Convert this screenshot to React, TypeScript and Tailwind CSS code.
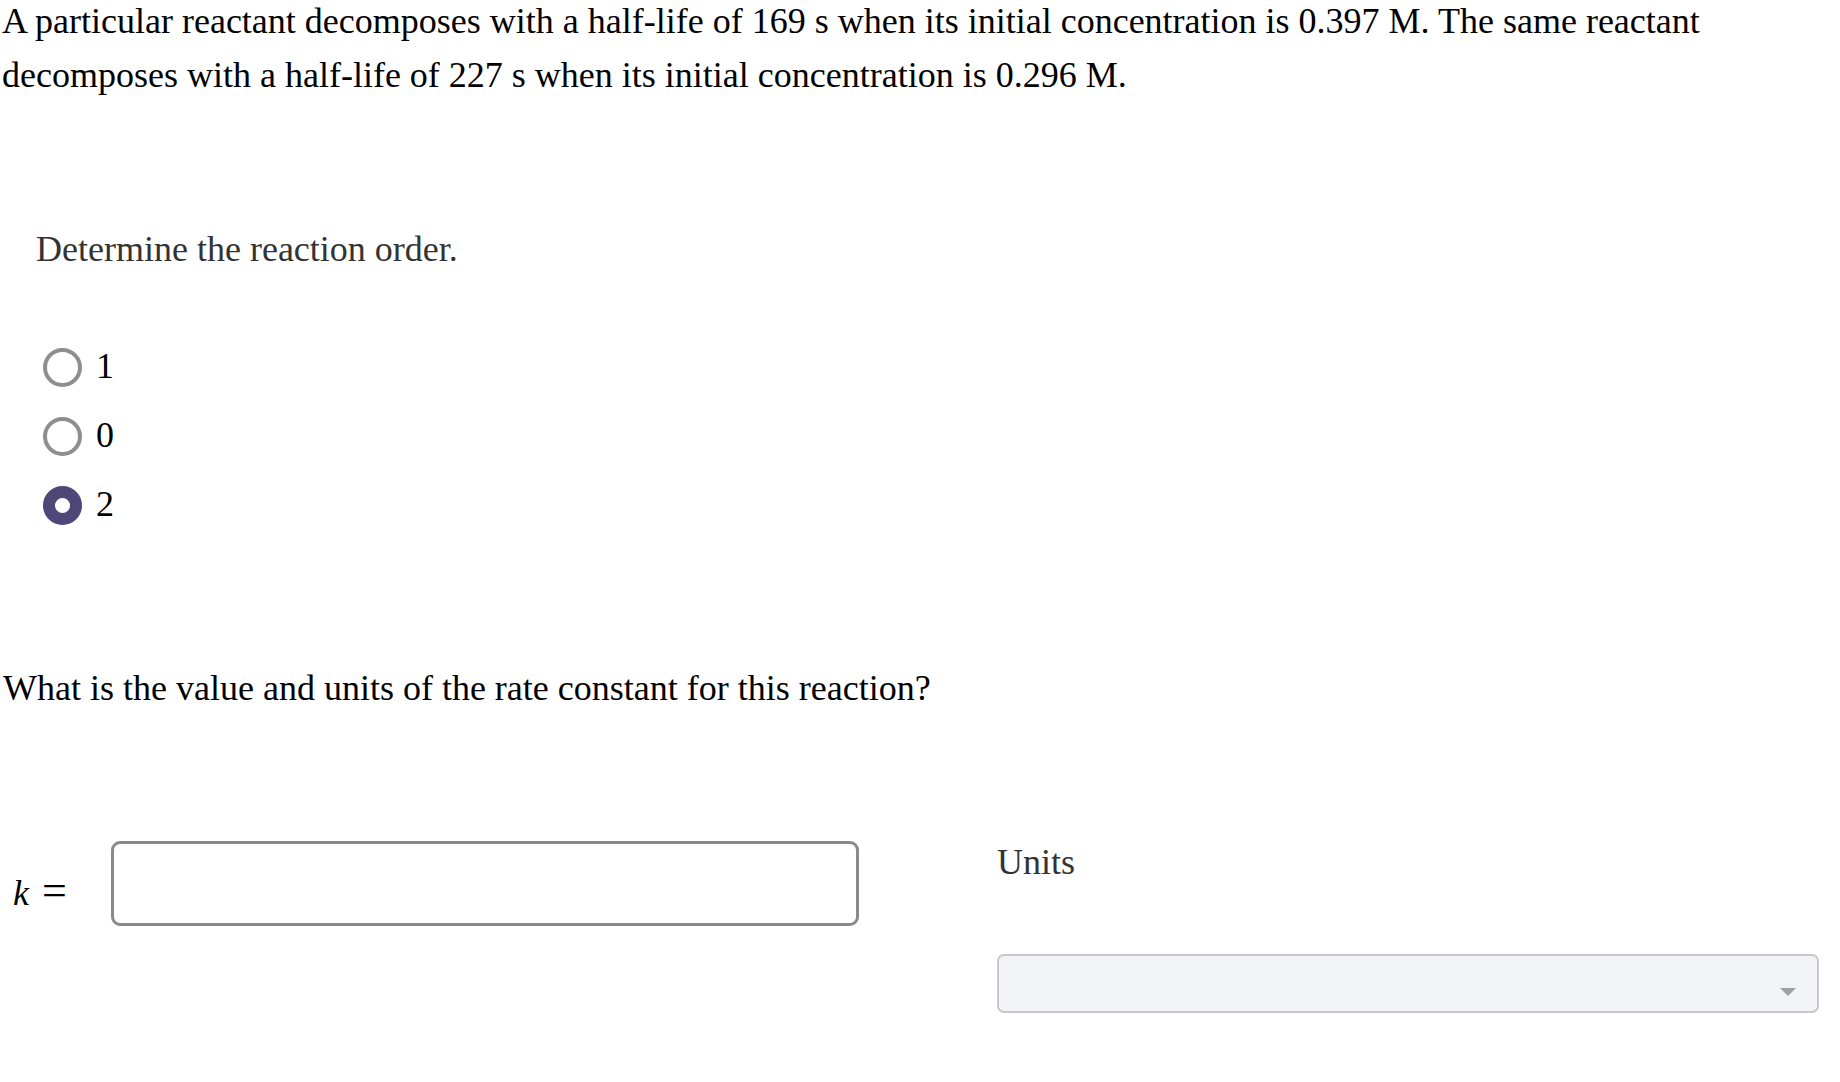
import React from "react";

const serif = "font-['Liberation_Serif','Times_New_Roman',serif]";

function Radio({ label, checked }: { label: string; checked?: boolean }) {
  return (
    <div className="flex h-[69px] items-center">
      {checked ? (
        <span className="ml-[43px] mt-[3px] box-border h-[39px] w-[39px] rounded-full border-[12.5px] border-[#4f4778] bg-white" />
      ) : (
        <span className="ml-[43px] mt-[3px] box-border h-[39px] w-[39px] rounded-full border-[4px] border-[#8e8e8e] bg-white" />
      )}
      <span className="ml-[14px] pt-[2px] text-[36px] leading-[69px] text-black">{label}</span>
    </div>
  );
}

export default function App() {
  return (
    <div className={`${serif} min-h-[1082px] w-[1840px] overflow-hidden bg-white text-black`}>
      <p className="mt-[-6px] pl-[2px] text-[36px] leading-[54px] text-black">
        A particular reactant decomposes with a half-life of 169 s when its initial concentration is 0.397 M. The same reactant
        <br />
        decomposes with a half-life of 227 s when its initial concentration is 0.296 M.
      </p>

      <p className="mt-[120px] pl-[36px] text-[36px] leading-[54px] text-[#333333]">
        Determine the reaction order.
      </p>

      <div className="mt-[55px] flex flex-col">
        <Radio label="1" />
        <Radio label="0" />
        <Radio label="2" checked />
      </div>

      <p className="mt-[123px] pl-[3px] text-[36px] leading-[54px] text-black">
        What is the value and units of the rate constant for this reaction?
      </p>

      <div className="mt-[120px] flex items-start">
        <div className="flex w-[997px] items-start">
          <span className="mt-[29px] flex w-[111px] items-baseline whitespace-nowrap pl-[13px] text-[36px] leading-[54px] text-black">
            <span className="italic">k</span>
            <span className="ml-[13px] text-[44px]">=</span>
          </span>
          <div className="mt-[6px] box-border h-[85px] w-[748px] rounded-[9px] border-[3.5px] border-[#8a8a8a] bg-white" />
        </div>
        <div className="flex w-[822px] flex-col">
          <span className="text-[36px] leading-[54px] text-[#333333]">Units</span>
          <div className="relative mt-[65px] box-border h-[59px] w-[822px] rounded-[7px] border-2 border-[#c8c8c8] bg-[#f2f3f6]">
            <svg
              className="absolute right-[21px] top-[32px]"
              width="16"
              height="8"
              viewBox="0 0 16 8"
            >
              <path d="M0 0 L16 0 L8 8 Z" fill="#a0a0a0" />
            </svg>
          </div>
        </div>
      </div>
    </div>
  );
}
